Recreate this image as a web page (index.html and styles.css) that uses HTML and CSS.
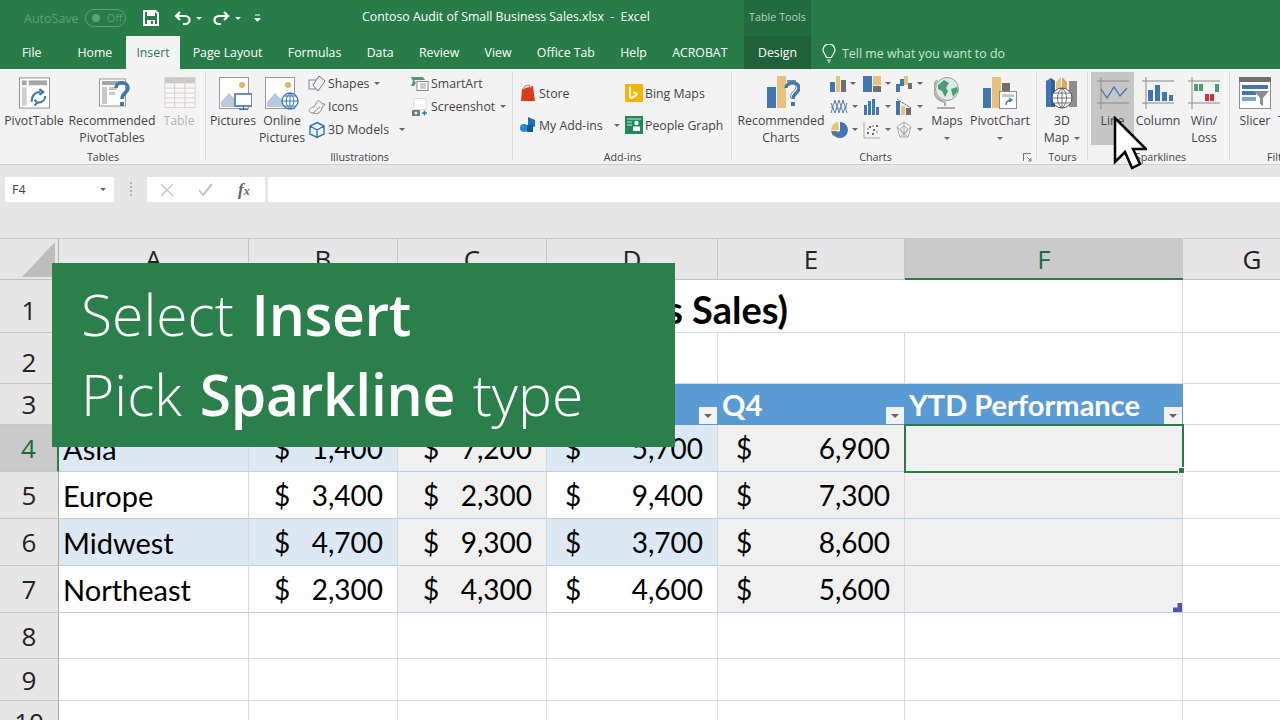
FILE: index.html
```html
<!DOCTYPE html>
<html lang="en">
<head>
<meta charset="utf-8">
<title>Contoso Audit of Small Business Sales.xlsx - Excel</title>
<link rel="stylesheet" href="styles.css">
</head>
<body>
<div class="app">
  <header class="titlebar">
    <div class="qat">
      <span class="autosave">AutoSave</span>
      <span class="toggle"><i class="dot"></i>Off</span>
      <svg class="q-save" width="16" height="16" viewBox="0 0 16 16"><path d="M1 1h11.5L15 3.5V15H1z" fill="none" stroke="#fff" stroke-width="2"/><rect x="4" y="2" width="8" height="4" fill="#fff"/><rect x="4" y="10" width="8" height="5" fill="#fff"/><rect x="8" y="11" width="2" height="3" fill="#277c47"/></svg>
      <svg class="q-undo" width="17" height="15" viewBox="0 0 17 15"><path d="M6 1 2 5l4 4M2 5h9c6 0 6 8 0 8H9" fill="none" stroke="#fff" stroke-width="2.2"/></svg>
      <i class="caret light"></i>
      <svg class="q-redo" width="17" height="15" viewBox="0 0 17 15"><path d="M11 1l4 4-4 4M15 5H6c-6 0-6 8 0 8h2" fill="none" stroke="#fff" stroke-width="2.2"/></svg>
      <i class="caret light"></i>
      <svg class="q-more" width="7" height="8" viewBox="0 0 7 8"><path d="M1 1h5" stroke="#fff"/><path d="M0 4h7L3.500 8z" fill="#fff"/></svg>
    </div>
    <div class="doc-title">Contoso Audit of Small Business Sales.xlsx&nbsp; - &nbsp;Excel</div>
    <div class="context-title">Table Tools</div>
  </header>

  <nav class="tabs">
    <div class="tab-list">
      <span class="tab tab-file">File</span>
      <span class="tab">Home</span>
      <span class="tab active">Insert</span>
      <span class="tab">Page Layout</span>
      <span class="tab">Formulas</span>
      <span class="tab">Data</span>
      <span class="tab">Review</span>
      <span class="tab">View</span>
      <span class="tab">Office Tab</span>
      <span class="tab">Help</span>
      <span class="tab">ACROBAT</span>
    </div>
    <span class="tab context">Design</span>
    <span class="tell">
      <svg width="14" height="19" viewBox="0 0 14 19"><path d="M4.500 13.500C4 10.500 1 9.500 1 6a6 6 0 0 1 12 0c0 3.500-3 4.500-3.500 7.500zM5 16h4M6 18h2" fill="none" stroke="#fff" stroke-width="1.200"/></svg>
      Tell me what you want to do
    </span>
  </nav>

  <section class="ribbon">
    <div class="group g-tables">
      <div class="group-body">
        <div class="big w-pivot">
          <svg width="33" height="34" viewBox="0 0 34 34"><rect x="1.500" y="1.500" width="31" height="31" fill="#fff" stroke="#8e8e8e"/><rect x="11" y="4" width="19" height="5" fill="#a6a6a6"/><rect x="4" y="4" width="5" height="5" fill="#a6a6a6"/><rect x="4" y="11" width="5" height="19" fill="#cfcfcf"/><path d="M14 26c0-6 3-10 9-10M22 13l4 3-4 3M20 27c5 0 8-3 8-7M17 24l3 3-3 3" fill="none" stroke="#3f77b3" stroke-width="2.200"/></svg>
          <span>PivotTable</span>
        </div>
        <div class="big w-rec">
          <svg class="nudge-r" width="31" height="34" viewBox="0 0 31 34"><rect x=".500" y="3" width="26" height="27" fill="#fff" stroke="#9a9a9a"/><rect x="3" y="5" width="22" height="4" fill="#a6a6a6"/><rect x="3" y="11" width="5" height="17" fill="#c8c8c8"/><rect x="10" y="11" width="8" height="3" fill="#c8c8c8"/><rect x="10" y="16" width="6" height="3" fill="#c8c8c8"/><path d="M17 12c0-7 12-7 12 0 0 5-6 5-6 11" fill="none" stroke="#3f77b3" stroke-width="3.600"/><rect x="21" y="26" width="4" height="4" fill="#3f77b3"/></svg>
          <span>Recommended<br>PivotTables</span>
        </div>
        <div class="big w-table disabled">
          <svg width="33" height="34" viewBox="0 0 34 34"><rect x="2" y="1" width="31" height="31" fill="#f7f7f7" stroke="#d5d5d5"/><rect x="2" y="1" width="31" height="6" fill="#c9c9c9"/><path d="M2 12h31M2 17h31M2 22h31M2 27h31M12 1v31M22.500 1v31" stroke="#d9d0d0" fill="none"/></svg>
          <span>Table</span>
        </div>
        <div class="group-label">Tables</div>
      </div>
    </div>

    <div class="group g-illus">
      <div class="group-body">
        <div class="big w-pics">
          <svg class="nudge-r" width="33" height="34" viewBox="1 0 33 34"><rect x="1.500" y="1.500" width="29" height="31" fill="#fff" stroke="#9a9a9a"/><circle cx="24" cy="9" r="3" fill="#e3b85c"/><path d="M3 31v-5l8-9 7 7 4-3v10z" fill="#b9c9dd"/><rect x="17" y="18" width="17" height="12" fill="#fff" stroke="#3f77b3" stroke-width="1.600"/><path d="M25.500 30v3M21 33.500h9" stroke="#3f77b3" stroke-width="1.300"/></svg>
          <span>Pictures</span>
        </div>
        <div class="big w-online">
          <svg width="35" height="34" viewBox="1 0 35 34"><rect x="1.500" y="1.500" width="29" height="31" fill="#fff" stroke="#9a9a9a"/><circle cx="24" cy="9" r="3" fill="#e3b85c"/><path d="M3 31v-5l8-9 7 7 4-3v10z" fill="#b9c9dd"/><circle cx="26" cy="25" r="8" fill="#fff" stroke="#3f77b3" stroke-width="1.300"/><path d="M18 25h16M26 17v16M20 20h12M20 30h12M26 17c-5 4-5 12 0 16M26 17c5 4 5 12 0 16" fill="none" stroke="#3f77b3"/></svg>
          <span>Online<br>Pictures</span>
        </div>
        <div class="small-col w-shapes">
          <div class="small">
            <svg width="18" height="18" viewBox="0 0 18 18"><rect x="1" y="5" width="9" height="9" fill="none" stroke="#6f8fb0"/><path d="M11 1l6 5-7 10-5-6z" fill="#f3f3f3" stroke="#777"/></svg>
            <span>Shapes</span><i class="caret tight"></i>
          </div>
          <div class="small">
            <svg width="18" height="18" viewBox="0 0 18 18"><path d="M6 9C2 9 1 13 1 13s2 3 5 2c3 2 8-1 8-6 3-1 3-3 3-3h-3c-1-4-6-4-6 0zM5 15l7-6M10 5v.500" fill="none" stroke="#8a8a8a"/></svg>
            <span>Icons</span>
          </div>
          <div class="small">
            <svg width="18" height="18" viewBox="0 0 18 18"><path d="M9 1.500 16 5v8l-7 3.500L2 13V5zM2 5l7 4 7-4M9 9v7.500" fill="none" stroke="#2f78b7" stroke-width="1.400"/></svg>
            <span>3D Models</span><i class="caret gap"></i>
          </div>
        </div>
        <div class="small-col w-smart">
          <div class="small">
            <svg width="18" height="18" viewBox="0 0 18 18"><path d="M0 2h12l2 3H3l2 3-2 3H0l2-4.500z" fill="#4a9c6d"/><rect x="6" y="6.500" width="11" height="9" fill="#fff" stroke="#888"/><path d="M9 9h6M9 11h6M9 13h6" stroke="#999"/></svg>
            <span>SmartArt</span>
          </div>
          <div class="small">
            <svg width="18" height="18" viewBox="0 0 18 18"><rect x="3" y="0.500" width="12" height="11" fill="#fff" stroke="#ddd"/><rect x="1" y="12" width="8" height="6" rx="1" fill="#777"/><circle cx="5" cy="15" r="1.500" fill="#eee"/><path d="M11 15h5M13.500 12.500v5" stroke="#2f78b7" stroke-width="1.400"/></svg>
            <span>Screenshot</span><i class="caret tight"></i>
          </div>
        </div>
        <div class="group-label">Illustrations</div>
      </div>
    </div>

    <div class="group g-addins">
      <div class="group-body">
        <div class="addin-col w-store">
          <div class="small">
            <svg width="16" height="19" viewBox="0 0 16 19"><path d="M2 5 13 2l2 15H1z" fill="#d83b1a"/><path d="M4 6C4 0 10 0 11 4" fill="none" stroke="#e98a74" stroke-width="1.200"/></svg>
            <span>Store</span>
          </div>
          <div class="small">
            <svg width="16" height="16" viewBox="0 0 16 16"><path d="M8 0l7 3v7l-7-2z" fill="#1a6fb5"/><circle cx="4" cy="11" r="4" fill="#2b88d8"/><rect x="7" y="8" width="6" height="7" fill="#0f5d9e"/></svg>
            <span>My Add-ins</span><i class="caret gap"></i>
          </div>
        </div>
        <div class="addin-col w-bing">
          <div class="small">
            <svg width="18" height="18" viewBox="0 0 18 18"><rect width="18" height="18" fill="#f4b400"/><path d="M6 3v10l5-2.500-2.500-1L7.500 7l5 2v2.500L7 15l-3-1.500V2.500z" fill="#fff"/></svg>
            <span>Bing Maps</span>
          </div>
          <div class="small">
            <svg width="18" height="18" viewBox="0 0 18 18"><rect width="18" height="18" fill="#1f8a55"/><path d="M2 3h14M2 6h5M2 9h5" stroke="#cfe8d9"/><circle cx="11.500" cy="7" r="2.200" fill="#fff"/><path d="M8 15v-4.500h7V15z" fill="#fff"/></svg>
            <span>People Graph</span>
          </div>
        </div>
        <div class="group-label">Add-ins</div>
      </div>
    </div>

    <div class="group g-charts">
      <div class="group-body">
        <div class="big w-recch">
          <svg class="nudge-r" width="33" height="34" viewBox="0 0 33 34"><rect x="0" y="11" width="9" height="21" fill="#3f77b3"/><rect x="10" y="0" width="9" height="32" fill="#e8c27a"/><rect x="20" y="4" width="9" height="2" fill="#8a8a8a"/><path d="M19 12c0-7 13-7 13 0 0 5-6 5-6 11" fill="none" stroke="#3f77b3" stroke-width="3.400"/><path d="M22 10c2-3 7-2 7 1 0 3-6 5-5.500 11" fill="none" stroke="#8a8a8a" stroke-width="1"/><rect x="24" y="26" width="4" height="4" fill="#3f77b3"/></svg>
          <span>Recommended<br>Charts</span>
        </div>
        <div class="chart-grid">
          <div class="ci"><svg width="16" height="18" viewBox="0 0 16 18"><rect y="7" width="5" height="10" fill="#3f77b3"/><rect x="6" y="1" width="4" height="16" fill="#e8c27a"/><rect x="11" y="5" width="5" height="12" fill="#6f6f6f"/></svg><i class="caret"></i></div>
          <div class="ci"><svg width="18" height="18" viewBox="0 0 18 18"><rect y="1" width="9" height="16" fill="#3f77b3"/><rect x="10" y="1" width="8" height="9" fill="#e8c27a"/><rect x="10" y="11" width="8" height="6" fill="#6f6f6f"/></svg><i class="caret"></i></div>
          <div class="ci"><svg width="18" height="18" viewBox="0 0 18 18"><rect x="1" y="9" width="4" height="8" fill="#3f77b3"/><rect x="5" y="4" width="4" height="7" fill="#3f77b3"/><rect x="9" y="1" width="4" height="9" fill="#e8c27a"/><rect x="13" y="8" width="4" height="6" fill="#6f6f6f"/></svg><i class="caret"></i></div>
          <div class="ci"><svg width="18" height="18" viewBox="0 0 18 18"><path d="M1 15 5 2l4 13 4-13 4 13M1 5l4 10 4-13 4 13 4-10" fill="none" stroke="#3f77b3" stroke-width=".9"/><path d="M1 10l4-6 4 8 4-8 4 6" fill="none" stroke="#999" stroke-width=".9"/></svg><i class="caret"></i></div>
          <div class="ci"><svg width="18" height="18" viewBox="0 0 18 18"><rect x="1" y="7" width="3" height="10" fill="#3f77b3"/><rect x="5" y="3" width="3" height="14" fill="#3f77b3"/><rect x="9" y="1" width="3" height="16" fill="#3f77b3"/><rect x="13" y="9" width="3" height="8" fill="#3f77b3"/></svg><i class="caret"></i></div>
          <div class="ci"><svg width="18" height="18" viewBox="0 0 18 18"><rect x="1" y="3" width="4" height="14" fill="#3f77b3"/><rect x="6" y="8" width="4" height="9" fill="#e8c27a"/><rect x="11" y="10" width="5" height="7" fill="#6f6f6f"/><path d="M2 1l14 9" stroke="#555" stroke-dasharray="2 1"/></svg><i class="caret"></i></div>
          <div class="ci"><svg width="18" height="18" viewBox="0 0 18 18"><path d="M8 1a8 8 0 0 0-7 8h8z" fill="#e8c27a"/><path d="M10 1a8 8 0 1 1-7 12l7-3z" fill="#3f77b3"/><path d="M1 10h7l-5 5z" fill="#6f6f6f"/></svg><i class="caret"></i></div>
          <div class="ci"><svg width="18" height="18" viewBox="0 0 18 18"><path d="M1 1v16h16" fill="none" stroke="#aaa"/><path d="M4 12h2M6 6h2M10 9h2M13 5h2M9 13h2" stroke="#3f77b3" stroke-width="2"/><path d="M4 8h2M9 5h2M13 11h2" stroke="#e8b04a" stroke-width="2"/></svg><i class="caret"></i></div>
          <div class="ci"><svg width="18" height="18" viewBox="0 0 18 18"><path d="M9 1l7 5-3 10H5L2 6zM9 5l3.500 2.500L11 12H7L5.500 7.500zM9 1v15M2 6l11 10M16 6 5 16" fill="none" stroke="#a0a0a0" stroke-width=".8"/></svg><i class="caret"></i></div>
        </div>
        <div class="big w-maps">
          <svg width="26" height="34" viewBox="4 0 26 34"><circle cx="17" cy="13" r="11.500" fill="#dfe9e6" stroke="#9a9a9a"/><path d="M8 9l6-5 5 3-3 5 2 3-3 6-3-6-4-2zM21 13l6-2 1 4-5 6z" fill="#4b9e6f"/><path d="M7 4C1 12 4 24 15 26M15 26v4M7 32h18" fill="none" stroke="#a8a8a8" stroke-width="2"/></svg>
          <span>Maps<br><i class="caret solo"></i></span>
        </div>
        <div class="big w-pchart">
          <svg width="36" height="34" viewBox="0 0 36 34"><rect x="1" y="12" width="8" height="20" fill="#3f77b3"/><rect x="10" y="1" width="9" height="31" fill="#e8c27a"/><rect x="20" y="7" width="8" height="8" fill="#6f6f6f"/><rect x="17.500" y="15.500" width="17" height="17" fill="#fff" stroke="#8e8e8e"/><rect x="20" y="18" width="12" height="3" fill="#c8c8c8"/><path d="M24 29c0-3 2-5 6-5M27 22l3 2-3 2" fill="none" stroke="#3f77b3" stroke-width="1.400"/></svg>
          <span>PivotChart<br><i class="caret solo"></i></span>
        </div>
        <div class="group-label label-charts">Charts</div>
        <svg class="launcher" width="9" height="9" viewBox="0 0 9 9"><path d="M.500 8V.500H8M4 4l4 4M8 5v3H5" fill="none" stroke="#777"/></svg>
      </div>
    </div>

    <div class="group g-tours">
      <div class="group-body">
        <div class="big w-3d">
          <svg width="32" height="34" viewBox="1 0 32 34"><path d="M1 5l5-3v29H1z" fill="#3f77b3"/><path d="M6 2l4 3v26H6z" fill="#2f5f95"/><path d="M11 6l5-5v14h-5z" fill="#e8c27a"/><path d="M17 1l5 5v10h-5z" fill="#d4ab5f"/><path d="M24 5h8v26h-8z" fill="#8e8e8e"/><circle cx="17" cy="22" r="10" fill="#fff" stroke="#555"/><path d="M7 22h20M17 12v20M9 17h16M9 27h16M17 12c-6 5-6 15 0 20M17 12c6 5 6 15 0 20" fill="none" stroke="#555" stroke-width=".8"/></svg>
          <span>3D<br>Map<i class="caret"></i></span>
        </div>
        <div class="group-label">Tours</div>
      </div>
    </div>

    <div class="group g-spark">
      <div class="group-body">
        <div class="big w-line hot">
          <svg width="34" height="34" viewBox="0 0 34 34"><path d="M1 5h32M1 27h32M5 1v32" stroke="#8a8a8a" fill="none"/><path d="M5 13l6 9 7-11 6 9 7-8" fill="none" stroke="#3f77b3" stroke-width="1.300"/></svg>
          <span>Line</span>
        </div>
        <div class="big w-col">
          <svg width="34" height="34" viewBox="0 0 34 34"><path d="M1 5h32M1 27h32M5 1v32" stroke="#8a8a8a" fill="none"/><rect x="7" y="14" width="5" height="11" fill="#3f77b3"/><rect x="14" y="9" width="5" height="16" fill="#3f77b3"/><rect x="21" y="16" width="5" height="9" fill="#3f77b3"/><rect x="28" y="19" width="4" height="6" fill="#3f77b3"/></svg>
          <span>Column</span>
        </div>
        <div class="big w-win">
          <svg width="34" height="34" viewBox="0 0 34 34"><path d="M1 5h32M1 27h32M5 1v32" stroke="#8a8a8a" fill="none"/><rect x="7" y="8" width="4" height="7" fill="#4b9e6f"/><rect x="12" y="8" width="4" height="7" fill="#4b9e6f"/><rect x="18" y="18" width="4" height="7" fill="#d13438"/><rect x="23" y="18" width="4" height="7" fill="#d13438"/><rect x="28" y="8" width="4" height="8" fill="#4b9e6f"/></svg>
          <span>Win/<br>Loss</span>
        </div>
        <div class="group-label">Sparklines</div>
      </div>
    </div>

    <div class="group g-filters">
      <div class="group-body">
        <div class="big w-slicer">
          <svg width="32" height="32" viewBox="0 0 32 32"><rect x=".500" y=".500" width="31" height="31" fill="#fff" stroke="#8e8e8e"/><rect width="32" height="5" fill="#6f6f6f"/><rect x="3" y="8" width="26" height="4" fill="#3f77b3"/><rect x="3" y="14" width="14" height="4" fill="#3f77b3"/><rect x="3" y="20" width="14" height="4" fill="#7ea6cf"/><path d="M15 14h15l-6 7v8l-3-2v-6z" fill="#8e8e8e"/></svg>
          <span>Slicer</span>
        </div>
        <div class="big w-tl"><span>Timeline</span></div>
        <div class="group-label label-filters">Filters</div>
      </div>
    </div>
  </section>

  <section class="formula-bar">
    <div class="namebox">F4<i class="caret"></i></div>
    <div class="grip"></div>
    <div class="fx-box">
      <svg width="14" height="14" viewBox="0 0 14 14"><path d="M1 1l12 12M13 1 1 13" stroke="#c4c4c4" stroke-width="1.400"/></svg>
      <svg width="15" height="13" viewBox="0 0 15 13"><path d="M1 7l4 5 9-11" fill="none" stroke="#c4c4c4" stroke-width="2"/></svg>
      <span class="fx">f<small>x</small></span>
    </div>
    <div class="formula-input"></div>
  </section>

  <main class="sheet">
    <div class="corner"></div>
    <div class="ch">A</div><div class="ch">B</div><div class="ch">C</div><div class="ch">D</div><div class="ch">E</div><div class="ch sel">F</div><div class="ch ch-last">G</div>

    <div class="rh tall">1</div>
    <div class="c title-cell"><span>Business Sales)</span></div>
    <div class="c"></div><div class="c"></div>

    <div class="rh tall">2</div>
    <div class="c"></div><div class="c"></div><div class="c"></div><div class="c"></div><div class="c"></div><div class="c"></div><div class="c"></div>

    <div class="rh">3</div>
    <div class="th"></div>
    <div class="th"></div>
    <div class="th"></div>
    <div class="th"><i class="fbtn"></i></div>
    <div class="th"><span>Q4</span><i class="fbtn"></i></div>
    <div class="th"><span>YTD Performance</span><i class="fbtn"></i></div>
    <div class="c"></div>

    <div class="rh rh-sel">4</div>
    <div class="d band txt">Asia</div>
    <div class="d band num"><span>$</span><span>1,400</span></div>
    <div class="d gray num"><span>$</span><span>7,200</span></div>
    <div class="d band num n2"><span>$</span><span>5,700</span></div>
    <div class="d gray num n2"><span>$</span><span>6,900</span></div>
    <div class="d gray active-cell"></div>
    <div class="c"></div>

    <div class="rh">5</div>
    <div class="d txt">Europe</div>
    <div class="d num"><span>$</span><span>3,400</span></div>
    <div class="d gray num"><span>$</span><span>2,300</span></div>
    <div class="d num n2"><span>$</span><span>9,400</span></div>
    <div class="d gray num n2"><span>$</span><span>7,300</span></div>
    <div class="d gray"></div>
    <div class="c"></div>

    <div class="rh">6</div>
    <div class="d band txt">Midwest</div>
    <div class="d band num"><span>$</span><span>4,700</span></div>
    <div class="d gray num"><span>$</span><span>9,300</span></div>
    <div class="d band num n2"><span>$</span><span>3,700</span></div>
    <div class="d gray num n2"><span>$</span><span>8,600</span></div>
    <div class="d gray"></div>
    <div class="c"></div>

    <div class="rh">7</div>
    <div class="d txt">Northeast</div>
    <div class="d num"><span>$</span><span>2,300</span></div>
    <div class="d gray num"><span>$</span><span>4,300</span></div>
    <div class="d num n2"><span>$</span><span>4,600</span></div>
    <div class="d gray num n2"><span>$</span><span>5,600</span></div>
    <div class="d gray resize-cell"></div>
    <div class="c"></div>

    <div class="rh">8</div>
    <div class="c"></div><div class="c"></div><div class="c"></div><div class="c"></div><div class="c"></div><div class="c"></div><div class="c"></div>
    <div class="rh">9</div>
    <div class="c"></div><div class="c"></div><div class="c"></div><div class="c"></div><div class="c"></div><div class="c"></div><div class="c"></div>
    <div class="rh">10</div>
    <div class="c"></div><div class="c"></div><div class="c"></div><div class="c"></div><div class="c"></div><div class="c"></div><div class="c"></div>
  </main>

  <aside class="banner">
    <p>Select <b>Insert</b></p>
    <p>Pick <b>Sparkline</b> type</p>
  </aside>

  <svg class="cursor" width="34" height="54" viewBox="0 0 34 54"><path d="M2 2v44l10-10 7 16 8-4-7-15h13z" fill="#fff" stroke="#000" stroke-width="2.500" stroke-linejoin="miter"/></svg>
</div>
</body>
</html>
```
FILE: styles.css
```css
* { box-sizing: border-box; }
html, body { margin: 0; padding: 0; }
body { width: 1280px; height: 720px; overflow: hidden; background: #fff; font-family: "Open Sans", "Noto Sans", sans-serif; color: #444; }
.app { position: relative; width: 1280px; height: 720px; overflow: hidden; }
i { display: inline-block; font-style: normal; }

/* caret */
.caret { width: 0; height: 0; flex: none; border-left: 3px solid transparent; border-right: 3px solid transparent; border-top: 3px solid #666; margin-left: 5px; vertical-align: middle; }
.caret.light { border-top-color: #e4f0e8; margin-left: 5px; }
.caret.tight { margin-left: 3px; }
.caret.gap { margin-left: 8px; }
.caret.solo { margin-left: 0; }

/* title bar */
.titlebar { display: flex; height: 36px; background: #277c47; color: #fff; font-size: 12.5px; }
.qat { width: 362px; display: flex; align-items: center; padding-left: 24px; flex: none; }
.autosave { color: #5f9f79; font-size: 12.5px; width: 61px; }
.toggle { width: 41px; height: 18px; border: 1px solid #5f9f79; border-radius: 9px; color: #5f9f79; font-size: 10.5px; display: flex; align-items: center; padding-left: 6px; gap: 7px; }
.dot { width: 8px; height: 8px; border-radius: 50%; background: #5f9f79; }
.q-save { margin-left: 17px; }
.q-undo { margin-left: 15px; }
.q-redo { margin-left: 11px; }
.q-more { margin-left: 13px; }
.doc-title { width: 382px; white-space: nowrap; font-size: 12.3px; }
.doc-title, .context-title { line-height: 34px; }
.context-title { width: 67px; background: #216b3e; color: #b5d3c0; font-size: 10.8px; text-align: center; }

/* tabs */
.tabs { display: flex; height: 33px; background: #277c47; color: #fff; font-size: 12.3px; align-items: stretch; }
.tab-list { display: flex; width: 744px; flex: none; }
.tab { padding: 0 12.7px; line-height: 33px; white-space: nowrap; }
.tab-file { margin-left: 9.3px; margin-right: 10.7px; }
.tab.active { background: #f3f3f3; color: #277c47; padding: 0; margin: 0 0 0 1px; width: 54px; text-align: center; }
.tab.context { background: #1f6238; width: 67px; padding: 0; text-align: center; }
.tell { display: flex; align-items: center; gap: 6px; margin-left: 11px; color: #cfe3d6; font-size: 12.4px; white-space: nowrap; padding-top: 1px; }

/* ribbon */
.ribbon { display: flex; height: 96px; background: #f3f3f3; border-bottom: 1px solid #cfcfcf; font-size: 12.3px; color: #444; overflow: hidden; }
.group { position: relative; flex: none; padding-top: 3px; }
.group::after { content: ""; position: absolute; right: 0; top: 3px; bottom: 4px; width: 1px; background: #dcdcdc; }
.group-body { display: flex; height: 92px; position: relative; }
.g-tables { width: 206px; }
.g-illus { width: 307px; }
.g-addins { width: 219px; }
.g-charts { width: 305px; }
.g-tours { width: 51px; }
.g-spark { width: 142px; padding-left: 3px; }
.g-filters { width: 50px; }
.g-filters::after { display: none; }
.group-label { position: absolute; left: 0; right: 0; top: 78px; text-align: center; font-size: 10.7px; line-height: 15px; color: #444; }
.label-charts { right: 18px; }
.label-filters { text-align: left; left: 37px; white-space: nowrap; }
.launcher { position: absolute; right: 5px; top: 81px; }

.big { flex: none; height: 73px; padding-top: 4px; display: flex; flex-direction: column; align-items: center; text-align: center; line-height: 17px; white-space: nowrap; }
.big svg { flex: none; height: 34px; margin-bottom: 2px; }
.big svg.nudge-r { margin-left: 5px; }
.disabled { color: #b5b5b5; }
.hot { background: #c6c6c6; }
.w-pivot { width: 68px; }
.w-rec { width: 88px; }
.w-table { width: 46px; }
.w-pics { width: 54px; }
.w-online { width: 44px; }
.w-shapes { width: 103px; margin-left: 4px; }
.w-smart { width: 95px; }
.w-recch { width: 88px; margin-left: 5px; }
.w-maps { width: 40px; }
.w-pchart { width: 66px; }
.w-3d { width: 50px; }
.w-line { width: 43px; }
.w-col { width: 46px; margin-left: 1px; }
.w-win { width: 46px; }
.w-slicer { width: 46px; margin-left: 2px; }
.w-tl { width: 10px; padding-top: 40px; align-items: flex-start; }

.small-col { flex: none; display: flex; flex-direction: column; }
.small { height: 23px; display: flex; align-items: center; gap: 2px; white-space: nowrap; }
.small svg { flex: none; }
.addin-col { flex: none; display: flex; flex-direction: column; gap: 14px; padding-top: 12px; }
.addin-col .small { height: 18px; gap: 3px; }
.w-bing .small { gap: 2px; }
.w-store { width: 105px; margin-left: 7px; }
.chart-grid { flex: none; width: 97px; display: grid; grid-template-columns: repeat(3, 32.5px); grid-auto-rows: 23px; margin-left: 5px; }
.ci { display: flex; align-items: center; }
.ci .caret { margin-left: 4px; }

/* formula bar */
.formula-bar { display: flex; height: 74px; background: #e6e6e6; padding: 12px 0 0 5px; border-bottom: 1px solid #c9c9c9; align-items: flex-start; }
.namebox { width: 109px; height: 25px; background: #fff; font-size: 12.5px; display: flex; align-items: center; justify-content: space-between; padding: 0 8px 0 7px; color: #444; }
.grip { width: 2px; height: 14px; margin: 5px 15px 0 16px; border-left: 2px dotted #b5b5b5; }
.fx-box { width: 118px; height: 25px; background: #fff; display: flex; align-items: center; padding-left: 13px; gap: 24px; }
.fx { font-family: "Liberation Serif", serif; font-style: italic; color: #666; font-size: 17px; font-weight: 700; margin-left: 1px; }
.fx small { font-size: 12px; }
.formula-input { flex: 1; height: 25px; background: #fff; margin-left: 3px; }

/* sheet */
.sheet { display: grid; grid-template-columns: 59px 190px 149px 149px 171px 187px 278px 138px; grid-template-rows: 41px 53px 51px 41px 47px 47px 47px 47px 46px 42px 42px; font-family: Lato, "Liberation Sans", sans-serif; color: #000; }
.corner { position: relative; background: #e6e6e6; border-right: 1px solid #b5b5b5; border-bottom: 1px solid #c0c0c0; }
.corner::after { content: ""; position: absolute; left: 22px; top: 3px; width: 33px; height: 35px; background: #bdbdbd; clip-path: polygon(100% 0, 100% 100%, 0 100%); }
.ch { background: #e6e6e6; border-right: 1px solid #c6c6c6; border-bottom: 1px solid #c0c0c0; font-family: "Open Sans", sans-serif; font-size: 26px; display: flex; align-items: center; justify-content: center; color: #222; }
.ch.sel { background: #cacaca; border-bottom: 2px solid #277c47; color: #1f6b3c; border-right: 0; }
.ch-last { border-right: 0; }
.rh { background: #e6e6e6; border-right: 1px solid #a9a9a9; border-bottom: 1px solid #c6c6c6; font-family: "Open Sans", sans-serif; font-size: 26px; display: flex; align-items: center; justify-content: center; color: #222; }
.rh.tall { padding-top: 7px; }
.rh-sel { background: #cacaca; color: #1f6b3c; border-right: 2px solid #277c47; }
.c { border-right: 1px solid #d9d9d9; border-bottom: 1px solid #d9d9d9; background: #fff; }
.c:last-child { border-right: 0; }
.title-cell { grid-column: span 5; display: flex; justify-content: flex-end; align-items: center; padding: 6px 117px 0 0; font-weight: 700; font-size: 38px; white-space: nowrap; border-right: 0; }
.th { background: #5b9bd5; color: #fff; font-weight: 700; font-size: 29px; display: flex; align-items: center; padding-left: 4px; position: relative; }
.fbtn { position: absolute; right: 1px; bottom: 1px; width: 18px; height: 17px; background: #f2f2f2; }
.fbtn::after { content: ""; position: absolute; left: 5px; top: 7px; border-left: 4px solid transparent; border-right: 4px solid transparent; border-top: 4px solid #666; }
.d { border-right: 1px solid #d9d9d9; border-bottom: 1px solid #b6d0e8; background: #fff; font-size: 28px; display: flex; align-items: center; }
.band { background: #dce9f4; }
.gray { background: #f0f0f0; }
.txt { padding-left: 4px; font-size: 29px; }
.num { justify-content: space-between; padding: 0 14px 0 25px; }
.num.n2 { padding-left: 18px; }
.active-cell { position: relative; outline: 2px solid #277c47; outline-offset: -1px; z-index: 1; }
.active-cell::after { content: ""; position: absolute; right: -3px; bottom: -3px; width: 5px; height: 5px; background: #277c47; border: 1px solid #fff; }
.resize-cell { position: relative; }
.resize-cell::after { content: ""; position: absolute; right: 0; bottom: 0; width: 9px; height: 9px; background: #4f55b5; clip-path: polygon(50% 0, 100% 0, 100% 100%, 0 100%, 0 50%, 50% 50%); }

/* banner + pointer */
.banner { position: absolute; left: 52px; top: 263px; width: 623px; height: 184px; background: #2a7f4b; color: #fff; padding: 11px 0 0 29px; font-family: "Open Sans", sans-serif; font-weight: 300; font-size: 57px; line-height: 80px; word-spacing: 3px; z-index: 2; }
.banner p { margin: 0; white-space: nowrap; }
.banner b { font-weight: 600; letter-spacing: -0.3px; }
.cursor { position: absolute; left: 1113px; top: 116px; z-index: 3; }
```
